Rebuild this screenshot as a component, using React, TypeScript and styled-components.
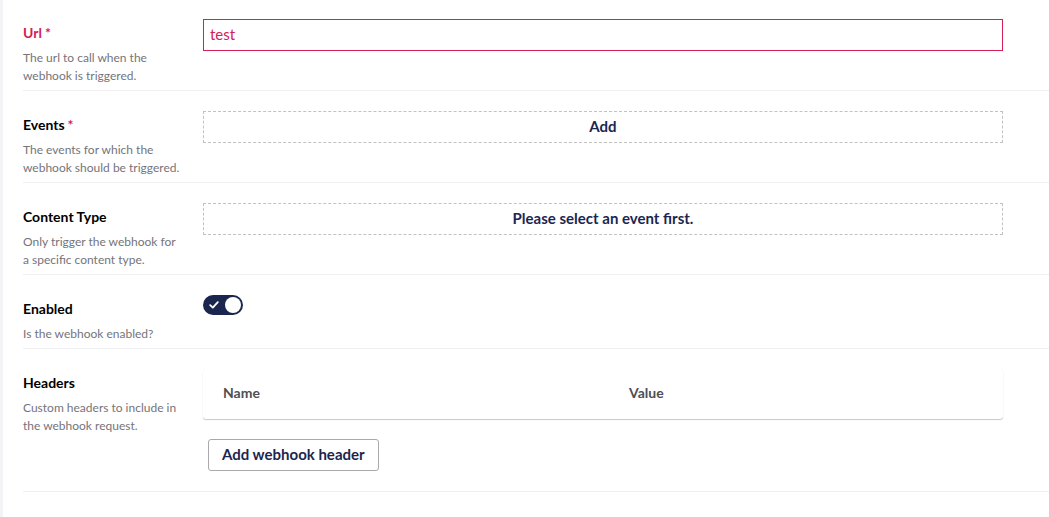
import React from "react";
import styled, { createGlobalStyle } from "styled-components";

const GlobalStyle = createGlobalStyle`
  html, body {
    margin: 0;
    padding: 0;
    background: #ffffff;
    font-family: Lato, "Noto Sans", sans-serif;
    color: #060606;
  }
  * { box-sizing: border-box; }
`;

const Page = styled.div`
  min-height: 100vh;
  border-left: 3px solid #f3f3f5;
  padding-left: 20px;
`;

const Row = styled.div`
  display: grid;
  grid-template-columns: 180px minmax(0, 800px);
  padding: 20px 0 5px;
  border-bottom: 1px solid #f0f0f2;
  &:first-child {
    padding-top: 19px;
  }
`;

const LabelCol = styled.div`
  padding-right: 22px;
`;

const Label = styled.div<{ $invalid?: boolean }>`
  font-size: 14px;
  font-weight: 700;
  line-height: 28px;
  margin-bottom: 2px;
  color: ${(p) => (p.$invalid ? "#d42054" : "#000000")};
`;

const Star = styled.span`
  color: #d42054;
  margin-left: 3px;
`;

const Description = styled.div`
  font-size: 12px;
  line-height: 18px;
  color: #75747a;
`;

const EditorCol = styled.div`
  padding-bottom: 15px;
  display: flex;
  flex-direction: column;
  align-items: flex-start;
`;

const TextInput = styled.input`
  width: 100%;
  height: 32px;
  border: 1px solid #d42054;
  border-radius: 0;
  padding: 0 6px 3px;
  font-family: Lato, sans-serif;
  font-size: 15px;
  color: #d42054;
  outline: none;
  background: #fff;
`;

const DashedButton = styled.button`
  width: 100%;
  height: 32px;
  padding: 0 0 3px;
  border: 1px dashed #c2c2c2;
  background: transparent;
  font-family: Lato, sans-serif;
  font-size: 15px;
  font-weight: 700;
  color: #1b264f;
  cursor: pointer;
`;

const Toggle = styled.button<{ $on?: boolean }>`
  position: relative;
  width: 40px;
  height: 20px;
  border: none;
  border-radius: 10px;
  padding: 0;
  background: ${(p) => (p.$on ? "#1b264f" : "#d8d7d9")};
  cursor: pointer;
`;

const Knob = styled.span`
  position: absolute;
  top: 2px;
  right: 2px;
  width: 16px;
  height: 16px;
  border-radius: 50%;
  background: #ffffff;
`;

const Check = styled.svg`
  position: absolute;
  left: 6px;
  top: 5px;
`;

const Table = styled.div`
  width: 100%;
  height: 50px;
  padding-bottom: 3px;
  display: grid;
  grid-template-columns: 406px 1fr;
  align-items: center;
  background: #fff;
  border-radius: 3px;
  box-shadow: 0 1px 1px rgba(0, 0, 0, 0.22), 0 0 1px rgba(0, 0, 0, 0.06);
`;

const HeadCell = styled.div`
  padding-left: 20px;
  font-size: 14px;
  font-weight: 700;
  color: #4f4e55;
`;

const OutlineButton = styled.button`
  margin: 20px 0 0 5px;
  height: 32px;
  padding: 0 13px 2px;
  border: 1px solid #a9a9ad;
  border-radius: 3px;
  background: #fff;
  font-family: Lato, sans-serif;
  font-size: 15px;
  font-weight: 700;
  color: #1b264f;
  cursor: pointer;
`;

export default function App() {
  return (
    <>
      <GlobalStyle />
      <Page>
        <Row>
          <LabelCol>
            <Label $invalid>
              Url<Star>*</Star>
            </Label>
            <Description>The url to call when the webhook is triggered.</Description>
          </LabelCol>
          <EditorCol>
            <TextInput defaultValue="test" />
          </EditorCol>
        </Row>
        <Row>
          <LabelCol>
            <Label>
              Events<Star>*</Star>
            </Label>
            <Description>The events for which the webhook should be triggered.</Description>
          </LabelCol>
          <EditorCol>
            <DashedButton>Add</DashedButton>
          </EditorCol>
        </Row>
        <Row>
          <LabelCol>
            <Label>Content Type</Label>
            <Description>Only trigger the webhook for a specific content type.</Description>
          </LabelCol>
          <EditorCol>
            <DashedButton>Please select an event first.</DashedButton>
          </EditorCol>
        </Row>
        <Row>
          <LabelCol>
            <Label>Enabled</Label>
            <Description>Is the webhook enabled?</Description>
          </LabelCol>
          <EditorCol>
            <Toggle $on aria-label="Enabled">
              <Check width="10" height="10" viewBox="0 0 10 10">
                <path d="M1.2 5.2 L3.8 7.6 L8.8 2.2" fill="none" stroke="#fff" strokeWidth="1.8" strokeLinecap="round" strokeLinejoin="round" />
              </Check>
              <Knob />
            </Toggle>
          </EditorCol>
        </Row>
        <Row>
          <LabelCol>
            <Label>Headers</Label>
            <Description>Custom headers to include in the webhook request.</Description>
          </LabelCol>
          <EditorCol>
            <Table>
              <HeadCell>Name</HeadCell>
              <HeadCell>Value</HeadCell>
            </Table>
            <OutlineButton>Add webhook header</OutlineButton>
          </EditorCol>
        </Row>
      </Page>
    </>
  );
}
